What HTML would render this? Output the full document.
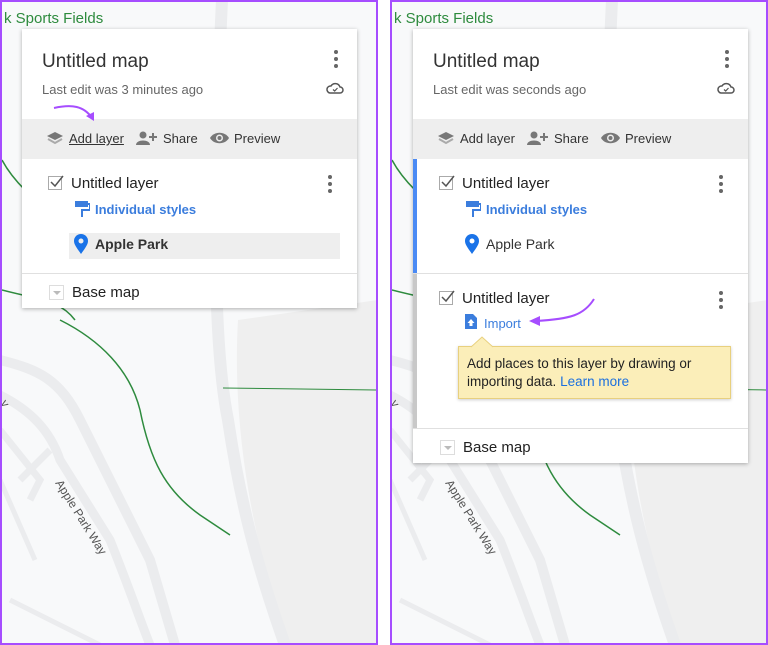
<!DOCTYPE html>
<html><head><meta charset="utf-8"><style>
*{margin:0;padding:0;box-sizing:border-box}
body{width:768px;height:645px;background:#fff;position:relative;overflow:hidden;font-family:"Liberation Sans",Arial,sans-serif;color:#222}
.panel{position:absolute;top:0;width:378px;height:645px;border:2px solid #a64dff;overflow:hidden;background:#f8f9fa}
.map{position:absolute;left:-2px;top:-2px}
.card{position:absolute;left:20px;top:27px;width:335px;background:#fff;box-shadow:0 1px 4px rgba(0,0,0,.3)}
.a{position:absolute;white-space:nowrap}
.t{font-size:19px;color:#333}
.sub{font-size:13px;color:#666}
.tb{position:absolute;left:0;width:335px;top:90px;height:40px;background:#eeeeee}
.tbt{font-size:13px;color:#333}
.lt{font-size:15px;color:#222}
.bl{font-size:13px;color:#3b7ddd;font-weight:bold}
.cb{position:absolute;width:14px;height:14px;border:1px solid #aaa}
.dots{position:absolute;width:4px}
.dots i{display:block;width:4px;height:4px;border-radius:2px;background:#666;margin-bottom:3px}
.hr{position:absolute;left:0;width:335px;height:1px;background:#e0e0e0}
.green{font-size:15px;color:#2e8b3e;position:absolute;top:8px;left:2px}
</style></head><body>

<!-- LEFT PANEL -->
<div class="panel" style="left:0">
<svg class="map" width="378" height="645">
 <path d="M238 320 C232 420 250 540 290 645 L378 645 L378 300 Z" fill="#efefef"/>
 <path d="M222 0 C215 150 210 330 228 420 C240 500 255 560 285 645" fill="none" stroke="#ebecee" stroke-width="12"/>
 <path d="M0 360 C40 370 60 380 80 420 L150 560 L175 645" fill="none" stroke="#ebecee" stroke-width="10"/>
 <path d="M0 395 C30 410 50 430 60 460 L110 540 C130 590 140 620 150 645" fill="none" stroke="#ebecee" stroke-width="9"/>
 <path d="M0 430 L40 480 L30 500 M20 480 L50 450" fill="none" stroke="#ebecee" stroke-width="7"/>
 <path d="M0 480 L35 560 M10 600 L100 645" fill="none" stroke="#ebecee" stroke-width="5"/>
 <path d="M2 160 C10 175 20 185 25 190 M2 290 C40 300 60 300 75 320 M60 320 C100 340 130 370 140 410 C150 460 165 490 200 515 L230 535" fill="none" stroke="#2e8b3e" stroke-width="1.5"/>
 <path d="M223 388 L378 390" stroke="#2e8b3e" stroke-width="1"/>
 <text x="0" y="0" transform="translate(55 483) rotate(58)" font-size="12" fill="#555" font-family="Liberation Sans">Apple Park Way</text>
 <text x="0" y="0" transform="translate(0 403) rotate(58)" font-size="12" fill="#555" font-family="Liberation Sans">y</text>
</svg>
<div class="green">k Sports Fields</div>
<div class="card" style="height:279px">
 <div class="a t" style="left:20px;top:22px">Untitled map</div>
 <div class="dots" style="left:312px;top:21px"><i></i><i></i><i></i></div>
 <div class="a sub" style="left:20px;top:53px">Last edit was 3 minutes ago</div>
 <svg class="a" style="left:304px;top:52px" width="18" height="14"><path d="M4 12 H14 A3 3 0 0 0 14 6 A5 5 0 0 0 5 5 A3.5 3.5 0 0 0 4 12Z" fill="none" stroke="#555" stroke-width="1.5"/><path d="M7 8.5 L8.7 10 L11.5 7" fill="none" stroke="#555" stroke-width="1.2"/></svg>
 <div class="tb">
  <svg class="a" style="left:24px;top:12px" width="18" height="14"><path d="M9 1 L17 5 L9 9 L1 5Z" fill="#777"/><path d="M2 8 L9 12 L16 8" fill="none" stroke="#aaa" stroke-width="2"/></svg>
  <div class="a tbt" style="left:47px;top:12px;text-decoration:underline">Add layer</div>
  <svg class="a" style="left:114px;top:11px" width="22" height="16"><circle cx="7" cy="5" r="3.5" fill="#777"/><path d="M0 15 C0 9 14 9 14 15Z" fill="#777"/><path d="M17 3 V11 M13 7 H21" stroke="#777" stroke-width="2"/></svg>
  <div class="a tbt" style="left:141px;top:12px">Share</div>
  <svg class="a" style="left:187px;top:12px" width="21" height="14"><path d="M1 7 C5 0 16 0 20 7 C16 14 5 14 1 7Z" fill="#777"/><circle cx="10.5" cy="7" r="3.5" fill="#eee"/><circle cx="10.5" cy="7" r="2" fill="#777"/></svg>
  <div class="a tbt" style="left:212px;top:12px">Preview</div>
 </div>
 <svg class="a" style="left:30px;top:73px" width="60" height="22"><path d="M2 6 C20 2 32 4 40 16" fill="none" stroke="#a64dff" stroke-width="2"/><path d="M34 14 L42 19 L42 10Z" fill="#a64dff"/></svg>
 <div class="cb" style="left:26px;top:147px"></div>
 <svg class="a" style="left:27px;top:144px" width="16" height="16"><path d="M2 9 L6 13 L14 3" fill="none" stroke="#555" stroke-width="1.5"/></svg>
 <div class="a lt" style="left:49px;top:146px">Untitled layer</div>
 <div class="dots" style="left:306px;top:146px"><i></i><i></i><i></i></div>
 <svg class="a" style="left:52px;top:171px" width="16" height="18"><rect x="1" y="1" width="13" height="6" fill="#3b7ddd"/><path d="M14 4 H16 V10 H8 V17" fill="none" stroke="#3b7ddd" stroke-width="2"/></svg>
 <div class="a bl" style="left:73px;top:173px">Individual styles</div>
 <div class="a" style="left:47px;top:204px;width:271px;height:26px;background:#eee"></div>
 <svg class="a" style="left:52px;top:205px" width="14" height="20"><path d="M7 20 C2 13 0 10 0 7 A7 7 0 0 1 14 7 C14 10 12 13 7 20Z" fill="#1a73e8"/><circle cx="7" cy="7" r="2.5" fill="#eee"/></svg>
 <div class="a" style="left:73px;top:207px;font-size:14px;font-weight:bold;color:#333">Apple Park</div>
 <div class="hr" style="top:244px"></div>
 <div class="a" style="left:27px;top:256px;width:15px;height:15px;border:1px solid #ddd"></div>
 <svg class="a" style="left:30px;top:261px" width="10" height="6"><path d="M1 1 L9 1 L5 5Z" fill="#bbb"/></svg>
 <div class="a lt" style="left:50px;top:255px">Base map</div>
</div>
</div>

<!-- RIGHT PANEL -->
<div class="panel" style="left:390px">
<svg class="map" width="378" height="645">
 <path d="M238 320 C232 420 250 540 290 645 L378 645 L378 300 Z" fill="#efefef"/>
 <path d="M222 0 C215 150 210 330 228 420 C240 500 255 560 285 645" fill="none" stroke="#ebecee" stroke-width="12"/>
 <path d="M0 360 C40 370 60 380 80 420 L150 560 L175 645" fill="none" stroke="#ebecee" stroke-width="10"/>
 <path d="M0 395 C30 410 50 430 60 460 L110 540 C130 590 140 620 150 645" fill="none" stroke="#ebecee" stroke-width="9"/>
 <path d="M0 430 L40 480 L30 500 M20 480 L50 450" fill="none" stroke="#ebecee" stroke-width="7"/>
 <path d="M0 480 L35 560 M10 600 L100 645" fill="none" stroke="#ebecee" stroke-width="5"/>
 <path d="M2 160 C10 175 20 185 25 190 M2 290 C40 300 60 300 75 320 M60 320 C100 340 130 370 140 410 C150 460 165 490 200 515 L230 535" fill="none" stroke="#2e8b3e" stroke-width="1.5"/>
 <path d="M223 388 L378 390" stroke="#2e8b3e" stroke-width="1"/>
 <text x="0" y="0" transform="translate(55 483) rotate(58)" font-size="12" fill="#555" font-family="Liberation Sans">Apple Park Way</text>
 <text x="0" y="0" transform="translate(0 403) rotate(58)" font-size="12" fill="#555" font-family="Liberation Sans">y</text>
</svg>
<div class="green">k Sports Fields</div>
<div class="card" style="height:434px;left:21px">
 <div class="a t" style="left:20px;top:22px">Untitled map</div>
 <div class="dots" style="left:312px;top:21px"><i></i><i></i><i></i></div>
 <div class="a sub" style="left:20px;top:53px">Last edit was seconds ago</div>
 <svg class="a" style="left:304px;top:52px" width="18" height="14"><path d="M4 12 H14 A3 3 0 0 0 14 6 A5 5 0 0 0 5 5 A3.5 3.5 0 0 0 4 12Z" fill="none" stroke="#555" stroke-width="1.5"/><path d="M7 8.5 L8.7 10 L11.5 7" fill="none" stroke="#555" stroke-width="1.2"/></svg>
 <div class="tb">
  <svg class="a" style="left:24px;top:12px" width="18" height="14"><path d="M9 1 L17 5 L9 9 L1 5Z" fill="#777"/><path d="M2 8 L9 12 L16 8" fill="none" stroke="#aaa" stroke-width="2"/></svg>
  <div class="a tbt" style="left:47px;top:12px">Add layer</div>
  <svg class="a" style="left:114px;top:11px" width="22" height="16"><circle cx="7" cy="5" r="3.5" fill="#777"/><path d="M0 15 C0 9 14 9 14 15Z" fill="#777"/><path d="M17 3 V11 M13 7 H21" stroke="#777" stroke-width="2"/></svg>
  <div class="a tbt" style="left:141px;top:12px">Share</div>
  <svg class="a" style="left:187px;top:12px" width="21" height="14"><path d="M1 7 C5 0 16 0 20 7 C16 14 5 14 1 7Z" fill="#777"/><circle cx="10.5" cy="7" r="3.5" fill="#eee"/><circle cx="10.5" cy="7" r="2" fill="#777"/></svg>
  <div class="a tbt" style="left:212px;top:12px">Preview</div>
 </div>
 <div class="a" style="left:0;top:130px;width:4px;height:114px;background:#4a8af4"></div>
 <div class="cb" style="left:26px;top:147px"></div>
 <svg class="a" style="left:27px;top:144px" width="16" height="16"><path d="M2 9 L6 13 L14 3" fill="none" stroke="#555" stroke-width="1.5"/></svg>
 <div class="a lt" style="left:49px;top:146px">Untitled layer</div>
 <div class="dots" style="left:306px;top:146px"><i></i><i></i><i></i></div>
 <svg class="a" style="left:52px;top:171px" width="16" height="18"><rect x="1" y="1" width="13" height="6" fill="#3b7ddd"/><path d="M14 4 H16 V10 H8 V17" fill="none" stroke="#3b7ddd" stroke-width="2"/></svg>
 <div class="a bl" style="left:73px;top:173px">Individual styles</div>
 <svg class="a" style="left:52px;top:205px" width="14" height="20"><path d="M7 20 C2 13 0 10 0 7 A7 7 0 0 1 14 7 C14 10 12 13 7 20Z" fill="#1a73e8"/><circle cx="7" cy="7" r="2.5" fill="#fff"/></svg>
 <div class="a" style="left:73px;top:207px;font-size:14px;color:#333">Apple Park</div>
 <div class="hr" style="top:244px"></div>
 <div class="a" style="left:0;top:245px;width:4px;height:154px;background:#c8c8c8"></div>
 <div class="cb" style="left:26px;top:262px"></div>
 <svg class="a" style="left:27px;top:259px" width="16" height="16"><path d="M2 9 L6 13 L14 3" fill="none" stroke="#555" stroke-width="1.5"/></svg>
 <div class="a lt" style="left:49px;top:261px">Untitled layer</div>
 <div class="dots" style="left:306px;top:262px"><i></i><i></i><i></i></div>
 <svg class="a" style="left:52px;top:285px" width="12" height="15"><path d="M0 0 H8 L12 4 V15 H0Z" fill="#3b7ddd"/><path d="M6 5 L9.5 9 H7.5 V12 H4.5 V9 H2.5Z" fill="#fff"/></svg>
 <div class="a bl" style="left:71px;top:287px;font-weight:normal;color:#3b7ddd;font-size:13px">Import</div>
 <svg class="a" style="left:113px;top:268px" width="75" height="36"><path d="M68 2 C58 18 45 22 10 24" fill="none" stroke="#a64dff" stroke-width="2"/><path d="M14 19 L3 24 L14 29Z" fill="#a64dff"/></svg>
 <div class="a" style="left:45px;top:317px;width:273px;height:53px;background:#fbeeb9;border:1px solid #e8d07e;box-shadow:0 1px 3px rgba(0,0,0,.2)"></div>
 <svg class="a" style="left:58px;top:307px" width="22" height="12"><path d="M0 11 L11 1 L22 11" fill="#fbeeb9" stroke="#e8d07e"/></svg>
 <div class="a" style="left:54px;top:326px;font-size:13.5px;line-height:18px;color:#222">Add places to this layer by drawing or<br>importing data. <span style="color:#1a6fdf">Learn more</span></div>
 <div class="hr" style="top:399px"></div>
 <div class="a" style="left:27px;top:411px;width:15px;height:15px;border:1px solid #ddd"></div>
 <svg class="a" style="left:30px;top:416px" width="10" height="6"><path d="M1 1 L9 1 L5 5Z" fill="#bbb"/></svg>
 <div class="a lt" style="left:50px;top:410px">Base map</div>
</div>
</div>
</body></html>
